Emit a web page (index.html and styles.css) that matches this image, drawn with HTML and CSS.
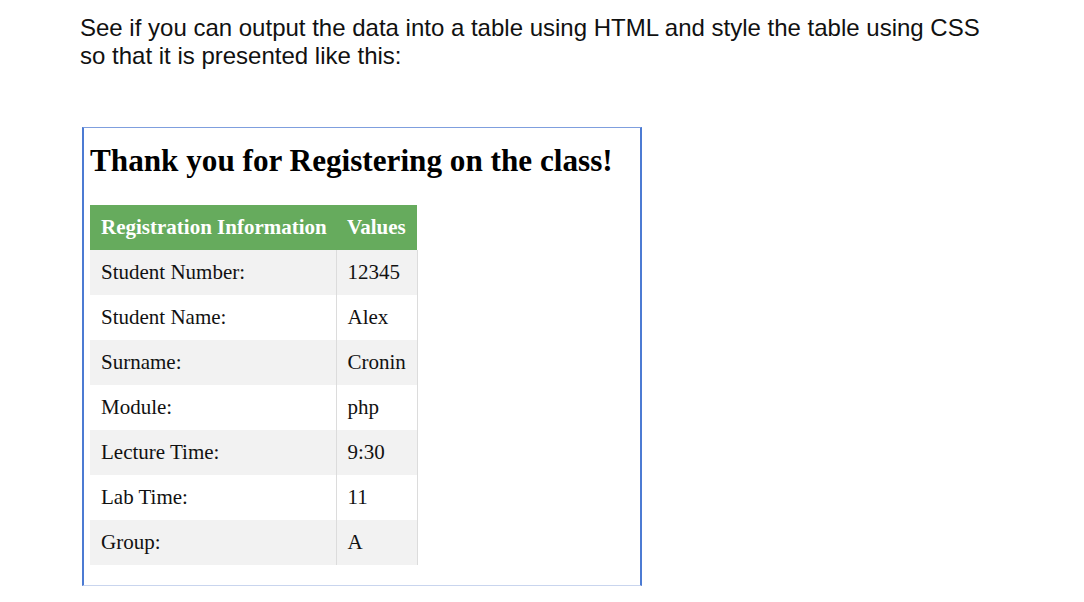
FILE: index.html
```html
<!DOCTYPE html>
<html>
<head>
<meta charset="utf-8">
<link rel="stylesheet" href="styles.css">
</head>
<body>
<p class="intro">See if you can output the data into a table using HTML and style the table using CSS<br>so that it is presented like this:</p>
<div class="frame">
  <h2 class="title">Thank you for Registering on the class!</h2>
  <table class="reg">
    <thead>
      <tr><th class="c1">Registration Information</th><th class="c2">Values</th></tr>
    </thead>
    <tbody>
      <tr><td>Student Number:</td><td>12345</td></tr>
      <tr><td>Student Name:</td><td>Alex</td></tr>
      <tr><td>Surname:</td><td>Cronin</td></tr>
      <tr><td>Module:</td><td>php</td></tr>
      <tr><td>Lecture Time:</td><td>9:30</td></tr>
      <tr><td>Lab Time:</td><td>11</td></tr>
      <tr><td>Group:</td><td>A</td></tr>
    </tbody>
  </table>
</div>
</body>
</html>
```
FILE: styles.css
```css
html, body {
  margin: 0;
  padding: 0;
  background: #ffffff;
}
body {
  width: 1084px;
  height: 602px;
  overflow: hidden;
}
.intro {
  margin: 14px 0 0 80px;
  width: 1000px;
  font-family: "Liberation Sans", Arial, sans-serif;
  font-size: 24px;
  line-height: 28px;
  color: #111;
}
.frame {
  margin: 57px 0 0 82px;
  width: 550px;
  height: 457px;
  padding: 0 0 0 6px;
  border-left: 2px solid #4c7bd3;
  border-right: 2px solid #4c7bd3;
  border-top: 1px solid #7f9fde;
  border-bottom: 1px solid #c9d5ee;
  box-sizing: content-box;
}
.title {
  margin: 0;
  padding-top: 14px;
  font-family: "Liberation Serif", "Times New Roman", serif;
  font-weight: bold;
  font-size: 31.2px;
  line-height: 38px;
  color: #000;
}
.reg {
  margin-top: 25px;
  border-collapse: collapse;
  table-layout: fixed;
  width: 327px;
  font-family: "Liberation Serif", "Times New Roman", serif;
  font-size: 21px;
  color: #111;
}
.reg th {
  background: #66ab5d;
  color: #fff;
  font-weight: bold;
  font-size: 21px;
  text-align: left;
  height: 45px;
  padding: 0 11px;
  white-space: nowrap;
  box-sizing: border-box;
}
.reg td {
  height: 45px;
  padding: 0 11px;
  text-align: left;
  white-space: nowrap;
  box-sizing: border-box;
  border-right: 1px solid #dcdcdc;
}
.reg tbody tr:nth-child(odd) {
  background: #f2f2f2;
}
.reg .c1 { width: 246px; }
.reg .c2 { width: 81px; }
```
